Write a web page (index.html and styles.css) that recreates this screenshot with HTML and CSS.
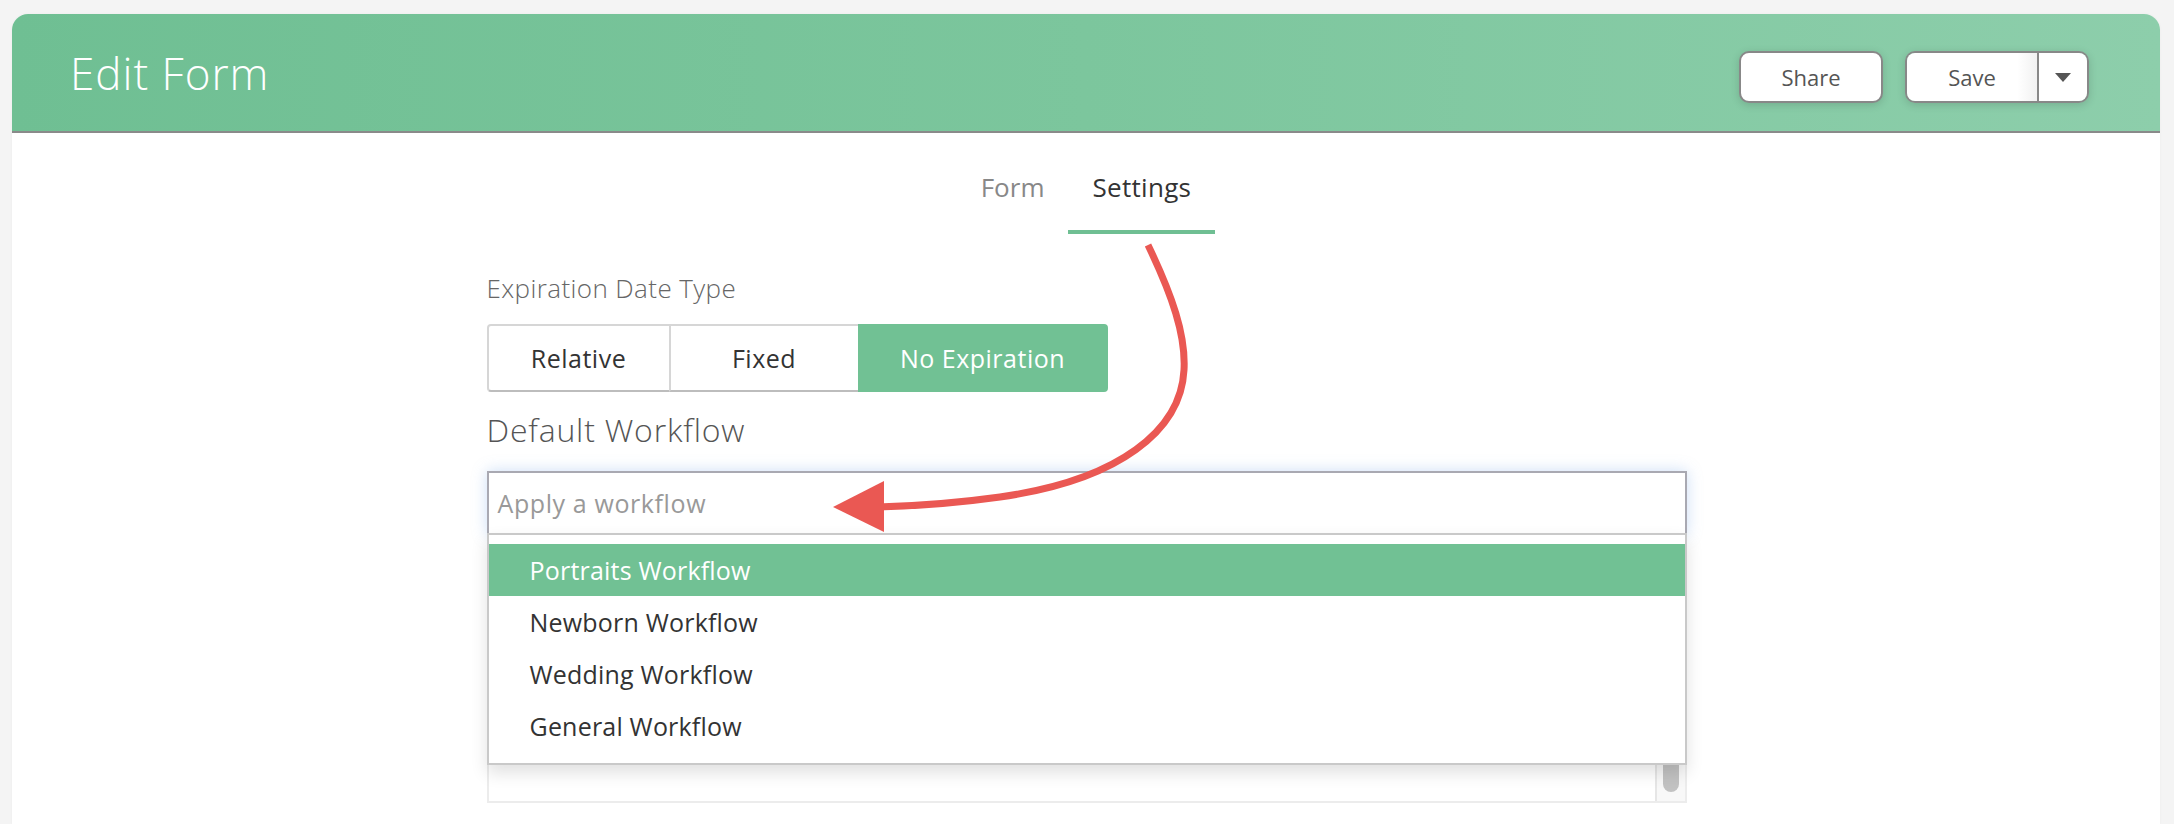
FILE: index.html
```html
<!DOCTYPE html>
<html lang="en">
<head>
<meta charset="utf-8">
<title>Edit Form</title>
<link rel="stylesheet" href="styles.css">
</head>
<body>
<div class="page">
  <div class="card">
    <header class="card-header">
      <h1 class="title">Edit Form</h1>
      <div class="actions">
        <button class="btn btn-share">Share</button>
        <div class="btn-group">
          <button class="btn-main">Save</button>
          <button class="btn-caret" aria-label="More"><svg width="16" height="9" viewBox="0 0 16 9"><path d="M0 0H16L8 9Z" fill="#555"/></svg></button>
        </div>
      </div>
    </header>
    <div class="card-body">
      <nav class="tabs">
        <a class="tab">Form</a>
        <a class="tab tab-active">Settings</a>
      </nav>
      <div class="settings">
        <div class="field-label">Expiration Date Type</div>
        <div class="segmented">
          <button class="seg seg-relative">Relative</button>
          <button class="seg seg-fixed">Fixed</button>
          <button class="seg seg-none seg-active">No Expiration</button>
        </div>
        <h2 class="section-title">Default Workflow</h2>
        <div class="select">
          <div class="select-input">Apply a workflow</div>
          <ul class="select-menu">
            <li class="option option-active">Portraits Workflow</li>
            <li class="option">Newborn Workflow</li>
            <li class="option">Wedding Workflow</li>
            <li class="option">General Workflow</li>
          </ul>
        </div>
        <div class="notes">
          <div class="notes-area"></div>
          <div class="scrollbar"><div class="thumb"></div></div>
        </div>
      </div>
    </div>
  </div>
  <svg class="annotation" viewBox="0 0 2174 824" width="2174" height="824">
    <path d="M1148 245 C1172 295 1186 335 1184 370 C1181 430 1120 480 1000 497 C950 504 915 506 878 507" fill="none" stroke="#ea5853" stroke-width="7" stroke-linecap="butt"/>
    <polygon points="833,507 884,481 884,532" fill="#ea5853"/>
  </svg>
</div>
</body>
</html>
```

FILE: styles.css
```css
* { box-sizing: border-box; }

html, body {
  margin: 0;
  padding: 0;
  height: 100%;
}

body {
  font-family: "Open Sans", "Liberation Sans", sans-serif;
  background: #f4f4f4;
  color: #333;
  overflow: hidden;
}

.page {
  position: relative;
  height: 824px;
  padding: 14px 14px 0 12px;
}

.card {
  height: 810px;
  background: #fff;
  border-radius: 16px 16px 0 0;
  display: flex;
  flex-direction: column;
  box-shadow: 0 0 3px rgba(0,0,0,0.04);
}

.card-header {
  height: 119px;
  flex: none;
  border-radius: 16px 16px 0 0;
  background: linear-gradient(90deg, #6fbf93 0%, #7cc69d 50%, #8dceab 100%);
  border-bottom: 2px solid #8a8a8a;
  display: flex;
  align-items: center;
  justify-content: space-between;
  padding: 0 71px 0 58px;
}

.title {
  margin: 0;
  font-size: 44px;
  font-weight: 300;
  color: #fff;
  line-height: 1;
  letter-spacing: 1px;
}

.actions {
  display: flex;
  gap: 22px;
  padding-top: 9px;
}

.btn, .btn-main, .btn-caret {
  font-family: "Open Sans", "Liberation Sans", sans-serif;
  font-size: 22px;
  color: #555;
  background: #fff;
  cursor: pointer;
}

.btn-share {
  width: 144px;
  height: 52px;
  border: 2px solid #888;
  border-radius: 10px;
  box-shadow: 0 2px 8px rgba(0,0,0,0.15);
}

.btn-group {
  display: flex;
  height: 52px;
  border: 2px solid #888;
  border-radius: 10px;
  overflow: hidden;
  box-shadow: 0 2px 8px rgba(0,0,0,0.15);
}

.btn-main {
  width: 132px;
  border: none;
  border-right: 2px solid #888;
  background: linear-gradient(90deg, #fff 0%, #fff 85%, #f1f1f1 100%);
}

.btn-caret {
  width: 48px;
  border: none;
  display: flex;
  align-items: center;
  justify-content: center;
  padding: 0;
}

.card-body {
  flex: 1;
  display: flex;
  flex-direction: column;
  align-items: center;
}

.tabs {
  display: flex;
  margin-top: 36px;
}

.tab {
  font-size: 26px;
  line-height: 36px;
  padding: 0 24px 25px;
  color: #888;
  border-bottom: 4px solid transparent;
}

.tab-active {
  color: #333;
  border-bottom-color: #6fbf93;
  letter-spacing: 0.3px;
}

.settings {
  width: 1200px;
  margin-left: 1px;
}

.field-label {
  margin-top: 39px;
  font-size: 26px;
  line-height: 30px;
  font-weight: 300;
  color: #666;
  letter-spacing: 0.4px;
}

.segmented {
  display: flex;
  margin-top: 21px;
  height: 68px;
}

.seg {
  font-family: "Open Sans", "Liberation Sans", sans-serif;
  font-size: 25px;
  color: #333;
  background: #fff;
  border: 2px solid #d6d6d6;
  border-bottom-color: #bdbdbd;
  margin-left: -2px;
  padding: 0;
  letter-spacing: 0.5px;
}

.seg-relative {
  margin-left: 0;
  width: 184px;
  border-radius: 4px 0 0 4px;
}

.seg-fixed { width: 191px; }

.seg-none {
  width: 250px;
  border-radius: 0 4px 4px 0;
}

.seg-active {
  background: #71c194;
  border-color: #71c194;
  color: #fff;
}

.section-title {
  margin: 20px 0 0;
  font-size: 32px;
  line-height: 36px;
  font-weight: 300;
  color: #555;
  letter-spacing: 0.8px;
}

.select {
  position: relative;
  margin-top: 23px;
  z-index: 2;
}

.select-input {
  height: 64px;
  border: 2px solid #a9a9b2;
  padding: 0 9px;
  display: flex;
  align-items: center;
  font-size: 25px;
  color: #999;
  letter-spacing: 0.6px;
  box-shadow: 0 0 14px rgba(110,160,230,0.35);
  background: #fff;
}

.select-menu {
  position: absolute;
  left: 0;
  right: 0;
  top: 62px;
  margin: 0;
  padding: 9px 0 11px;
  list-style: none;
  background: #fff;
  border: 2px solid #c9c9c9;
  box-shadow: 0 8px 16px rgba(0,0,0,0.12);
}

.option {
  height: 52px;
  display: flex;
  align-items: center;
  padding-left: 41px;
  font-size: 25px;
  color: #333;
  letter-spacing: 0.2px;
}

.option-active {
  background: #71c194;
  color: #fff;
}

.notes {
  display: flex;
  height: 163px;
  margin-top: 105px;
  border: 2px solid #ececec;
}

.notes-area {
  flex: 1;
}

.scrollbar {
  width: 30px;
  border-left: 2px solid #e6e6e6;
  background: #f8f8f8;
  display: flex;
  justify-content: center;
  align-items: flex-end;
  padding-bottom: 9px;
}

.thumb {
  width: 16px;
  height: 60px;
  border-radius: 8px;
  background: #c2c2c2;
}

.annotation {
  position: absolute;
  left: 0;
  top: 0;
  pointer-events: none;
  z-index: 5;
}
```
